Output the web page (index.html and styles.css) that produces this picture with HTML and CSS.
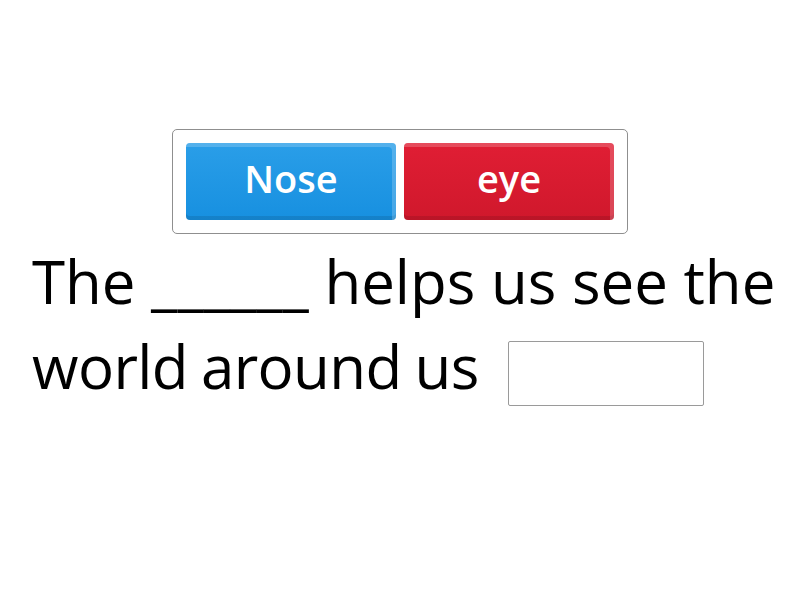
FILE: index.html
```html
<!DOCTYPE html>
<html>
<head>
<meta charset="utf-8">
<link rel="stylesheet" href="styles.css">
</head>
<body>
<div class="page">
  <div class="choices">
    <div class="btn blue">Nose</div>
    <div class="btn red">eye</div>
  </div>
  <div class="sentence">The ______ helps us see the <span class="tight">world around us</span> <span class="answer"></span></div>
</div>
</body>
</html>
```
FILE: styles.css
```css
html, body { margin: 0; padding: 0; background: #fff; }
.page {
  width: 800px;
  height: 600px;
  font-family: "Open Sans", sans-serif;
  display: flex;
  flex-direction: column;
  align-items: center;
  padding-top: 129px;
  box-sizing: border-box;
}
.choices {
  display: flex;
  gap: 8px;
  padding: 13px;
  border: 1px solid #8f8f8f;
  border-radius: 5px;
}
.btn {
  width: 210px;
  height: 77px;
  border-radius: 4px;
  color: #fff;
  font-weight: 600;
  font-size: 38px;
  display: flex;
  align-items: center;
  justify-content: center;
  padding-bottom: 8px;
  box-sizing: border-box;
}
.blue {
  background: linear-gradient(#2a9ee8, #1790e0);
  box-shadow: inset -4px 4px 0 rgba(255,255,255,0.2), inset 0 -4px 0 rgba(0,0,0,0.1);
}
.red {
  background: linear-gradient(#e01e34, #d0182c);
  box-shadow: inset -4px 4px 0 rgba(255,255,255,0.2), inset 0 -4px 0 rgba(0,0,0,0.1);
}
.sentence {
  align-self: flex-start;
  margin-left: 32px;
  width: 760px;
  font-size: 60px;
  line-height: 85px;
  color: #000;
  margin-top: 5px;
}
.tight {
  letter-spacing: -0.6px;
  word-spacing: -2px;
}
.answer {
  display: inline-block;
  width: 194px;
  height: 63px;
  border: 1px solid #9a9a9a;
  border-radius: 2px;
  vertical-align: -17px;
  margin-left: 14px;
}
```
